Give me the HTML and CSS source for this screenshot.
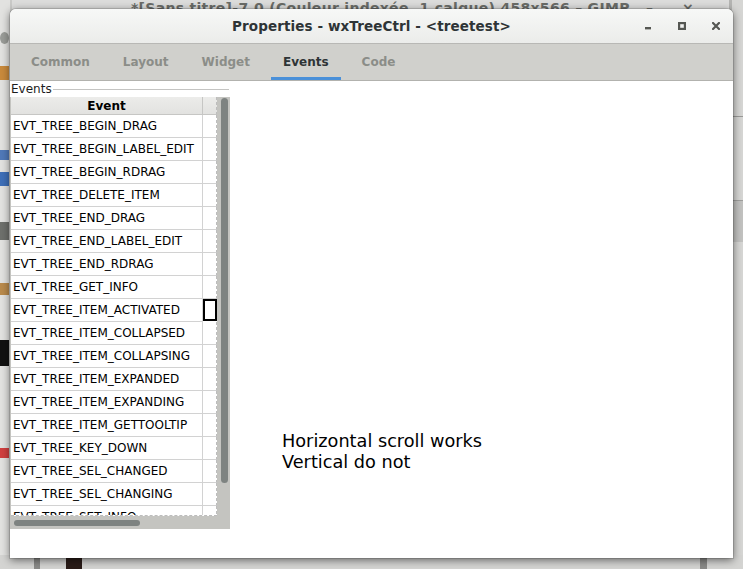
FILE: index.html
```html
<!DOCTYPE html>
<html>
<head>
<meta charset="utf-8">
<title>Properties - wxTreeCtrl</title>
<link rel="stylesheet" href="styles.css">
</head>
<body>
<div class="desktop">
  <div class="bg-top">
    <span class="bg-title">*[Sans titre]-7.0 (Couleur indexée, 1 calque) 458x566 – GIMP</span>
    <span class="bg-btn bg-min">–</span>
    <span class="bg-btn bg-close">×</span>
  </div>
  <div class="bg-left">
    <div class="ico ico1"></div>
    <div class="ico ico2"></div>
    <div class="ico ico3"></div>
    <div class="ico ico4"></div>
    <div class="ico ico5"></div>
    <div class="ico ico6"></div>
    <div class="ico ico7"></div>
    <div class="ico ico8"></div>
  </div>
  <div class="bg-right">
    <div class="bgr-sep"></div>
    <div class="bgr-bar"></div>
  </div>
  <div class="bg-bottom">
    <div class="bgb-dark"></div>
    <div class="bgb-img"></div>
    <div class="bgb-dark2"></div>
  </div>

  <div class="window">
    <div class="titlebar">
      <div class="title">Properties - wxTreeCtrl - &lt;treetest&gt;</div>
      <div class="wbtns">
        <svg class="wbtn" width="8" height="8" viewBox="0 0 8 8"><rect x="1" y="5" width="6" height="2.4" fill="#555753"/></svg>
        <svg class="wbtn" width="8" height="8" viewBox="0 0 8 8"><rect x="1.1" y="1.1" width="5.8" height="5.8" fill="none" stroke="#555753" stroke-width="2.2"/></svg>
        <svg class="wbtn" width="8" height="8" viewBox="0 0 8 8"><path d="M1 1 L7 7 M7 1 L1 7" stroke="#555753" stroke-width="2.2" stroke-linecap="square"/></svg>
      </div>
    </div>
    <div class="tabs">
      <div class="tab">Common</div>
      <div class="tab">Layout</div>
      <div class="tab">Widget</div>
      <div class="tab active">Events</div>
      <div class="tab">Code</div>
    </div>
    <div class="content">
      <div class="staticbox">
        <div class="sb-head"><span class="sb-label">Events</span><span class="sb-line"></span></div>
        <div class="panel">
          <div class="grid">
            <div class="hdr">Event</div><div class="hdr hdr2"></div>
            <div class="cell">EVT_TREE_BEGIN_DRAG</div><div class="cell2"></div>
            <div class="cell">EVT_TREE_BEGIN_LABEL_EDIT</div><div class="cell2"></div>
            <div class="cell">EVT_TREE_BEGIN_RDRAG</div><div class="cell2"></div>
            <div class="cell">EVT_TREE_DELETE_ITEM</div><div class="cell2"></div>
            <div class="cell">EVT_TREE_END_DRAG</div><div class="cell2"></div>
            <div class="cell">EVT_TREE_END_LABEL_EDIT</div><div class="cell2"></div>
            <div class="cell">EVT_TREE_END_RDRAG</div><div class="cell2"></div>
            <div class="cell">EVT_TREE_GET_INFO</div><div class="cell2"></div>
            <div class="cell">EVT_TREE_ITEM_ACTIVATED</div><div class="cell2 cursor"></div>
            <div class="cell">EVT_TREE_ITEM_COLLAPSED</div><div class="cell2"></div>
            <div class="cell">EVT_TREE_ITEM_COLLAPSING</div><div class="cell2"></div>
            <div class="cell">EVT_TREE_ITEM_EXPANDED</div><div class="cell2"></div>
            <div class="cell">EVT_TREE_ITEM_EXPANDING</div><div class="cell2"></div>
            <div class="cell">EVT_TREE_ITEM_GETTOOLTIP</div><div class="cell2"></div>
            <div class="cell">EVT_TREE_KEY_DOWN</div><div class="cell2"></div>
            <div class="cell">EVT_TREE_SEL_CHANGED</div><div class="cell2"></div>
            <div class="cell">EVT_TREE_SEL_CHANGING</div><div class="cell2"></div>
            <div class="cell">EVT_TREE_SET_INFO</div><div class="cell2"></div>
          </div>
          <div class="vscroll"><div class="vthumb"></div></div>
          <div class="hscroll"><div class="hthumb"></div></div>
          <div class="corner"></div>
        </div>
      </div>
      <div class="note">Horizontal scroll works<br>Vertical do not</div>
    </div>
  </div>
</div>
</body>
</html>
```

FILE: styles.css
```css
* { box-sizing: border-box; }
html, body { margin: 0; padding: 0; }
body {
  width: 743px;
  height: 569px;
  overflow: hidden;
  font-family: "DejaVu Sans", "Liberation Sans", sans-serif;
  background: #c6c6c6;
}
.desktop {
  position: relative;
  width: 743px;
  height: 569px;
  overflow: hidden;
}

/* desktop background behind the window */
.bg-top {
  position: absolute;
  left: 0; top: 0;
  width: 743px; height: 20px;
  background: #dcdcdb;
}
.bg-title {
  position: absolute;
  left: 131px; top: 0;
  font-size: 14px;
  font-weight: bold;
  line-height: 16px;
  color: #6a6c68;
  white-space: nowrap;
  letter-spacing: 0.3px;
}
.bg-btn {
  position: absolute;
  top: 0;
  font-size: 14px;
  font-weight: bold;
  line-height: 16px;
  color: #6a6c68;
}
.bg-min { left: 646px; }
.bg-close { left: 682px; }

.bg-left {
  position: absolute;
  left: 0; top: 0;
  width: 12px; height: 569px;
  background: #e2e2e0;
  border-right: 2px solid #c9c9c7;
}
.ico { position: absolute; left: 0; width: 9px; }
.ico1 { top: 32px; height: 12px; background: #9a9c98; border-radius: 50%; }
.ico2 { top: 66px; height: 14px; background: #c98a3c; }
.ico3 { top: 150px; height: 10px; background: #5079b8; }
.ico4 { top: 172px; height: 14px; background: #3e6fb8; }
.ico5 { top: 222px; height: 18px; background: #6e706c; }
.ico6 { top: 283px; height: 12px; background: #b98a4c; }
.ico7 { top: 340px; height: 26px; background: #111; }
.ico8 { top: 448px; height: 10px; background: #d04040; }

.bg-right {
  position: absolute;
  right: 0; top: 0;
  width: 14px; height: 569px;
  background: #d6d6d4;
  border-left: 3px solid #b4b4b2;
}
.bgr-sep {
  position: absolute;
  left: 0; top: 116px;
  width: 14px; height: 1px;
  background: #9a9a98;
}
.bgr-bar {
  position: absolute;
  left: 0; top: 200px;
  width: 14px; height: 42px;
  background: #c2c2c0;
  border-top: 1px solid #a0a09e;
}
.bg-bottom {
  position: absolute;
  left: 0; bottom: 0;
  width: 743px; height: 14px;
  background: #d4d4d2;
}
.bgb-dark { position: absolute; left: 34px; top: 0; width: 6px; height: 14px; background: #8a8a88; }
.bgb-img { position: absolute; left: 66px; top: 0; width: 16px; height: 14px; background: #2a1c18; }
.bgb-dark2 { position: absolute; left: 700px; top: 0; width: 7px; height: 14px; background: #8a8a88; }

/* the window */
.window {
  position: absolute;
  left: 10px; top: 9px;
  width: 723px; height: 549px;
  display: flex;
  flex-direction: column;
  background: #fff;
  border-radius: 6px 6px 0 0;
  box-shadow: 0 2px 8px rgba(0, 0, 0, 0.55), 0 0 0 1px rgba(0, 0, 0, 0.12);
  overflow: hidden;
}
.titlebar {
  position: relative;
  height: 35px;
  flex: none;
  display: flex;
  align-items: center;
  justify-content: center;
  background: linear-gradient(#f7f8f7, #ebecea);
  border-bottom: 1px solid #b8b8b5;
}
.title {
  font-size: 13.5px;
  letter-spacing: 0.1px;
  font-weight: bold;
  color: #2e3436;
}
.wbtns {
  position: absolute;
  right: 13px;
  top: 13px;
  display: flex;
  gap: 26px;
}
.wbtn { display: block; }

.tabs {
  height: 37px;
  flex: none;
  display: flex;
  align-items: stretch;
  gap: 9px;
  padding-left: 9px;
  background: #d0d0cc;
  border-bottom: 1px solid #b2b2ae;
}
.tab {
  padding: 0 12px;
  display: flex;
  align-items: center;
  font-size: 12px;
  font-weight: bold;
  color: #8b8d88;
}
.tab.active {
  color: #2e3436;
  box-shadow: inset 0 -3px 0 #4a90d9;
}

.content {
  flex: 1;
  display: flex;
  align-items: flex-start;
  background: #fff;
}
.staticbox {
  width: 220px;
  flex: none;
}
.sb-head {
  height: 16px;
  display: flex;
  align-items: center;
  padding-left: 1px;
  padding-right: 1px;
}
.sb-label {
  font-size: 12px;
  line-height: 16px;
  color: #1c1c1c;
}
.sb-line {
  flex: 1;
  height: 1px;
  background: #c4c4c2;
  margin-left: 1px;
  margin-top: 1px;
}
.panel {
  position: relative;
  height: 432px;
  background: #c4c4c0;
  display: grid;
  grid-template-columns: 207px 13px;
  grid-template-rows: 419px 13px;
}
.grid {
  margin-left: 1px;
  overflow: hidden;
  background: #fff;
  display: grid;
  grid-template-columns: 192px 14px;
  grid-auto-rows: 23px;
  grid-template-rows: 18px;
  border-bottom: 1px dashed #bcbcbc;
  align-content: start;
}
.hdr {
  background: linear-gradient(#ececea, #e2e2e0);
  border-right: 1px solid #c6c6c4;
  border-bottom: 1px solid #c6c6c4;
  font-size: 12px;
  font-weight: bold;
  color: #000;
  text-align: center;
  line-height: 17px;
  padding-top: 1px;
}
.hdr2 { border-right: 1px dashed #bdbdbd; }
.cell {
  border-right: 1px solid #d2d2d2;
  border-bottom: 1px solid #d2d2d2;
  font-size: 12px;
  color: #000;
  line-height: 22px;
  padding-left: 2px;
  white-space: nowrap;
  overflow: hidden;
}
.cell2 {
  border-right: 1px dashed #bdbdbd;
  border-bottom: 1px solid #d2d2d2;
}
.cell2.cursor {
  border: 2px solid #000;
  margin-bottom: 1px;
}
.vscroll {
  padding: 1px 0 0 4px;
}
.vthumb {
  width: 7px;
  height: 385px;
  background: #7e8381;
  border-radius: 4px;
}
.hscroll {
  padding: 4px 0 0 4px;
}
.hthumb {
  width: 126px;
  height: 6px;
  background: #7e8381;
  border-radius: 3px;
}
.note {
  margin-left: 52px;
  margin-top: 350px;
  font-size: 17.7px;
  line-height: 21px;
  color: #000;
  white-space: nowrap;
}
```
